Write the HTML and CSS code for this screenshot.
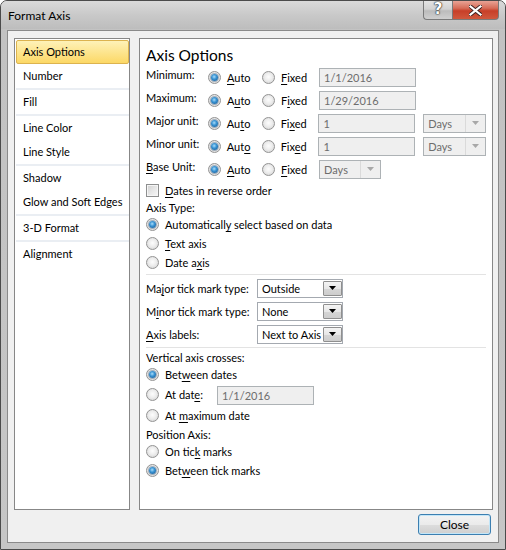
FILE: index.html
```html
<!DOCTYPE html>
<html>
<head>
<meta charset="utf-8">
<title>Format Axis</title>
<link rel="stylesheet" href="styles.css">
</head>
<body>
<div class="window">
  <div class="titlebar">
    <span class="title">Format Axis</span>
    <div class="caption">
      <div class="cap-btn help">?</div>
      <div class="cap-btn close">
        <svg width="13" height="11" viewBox="0 0 13 11"><path d="M1.5 1.5L11.5 9.5M11.5 1.5L1.5 9.5" stroke="#3a2020" stroke-width="4" stroke-linecap="square" fill="none"/><path d="M1.5 1.5L11.5 9.5M11.5 1.5L1.5 9.5" stroke="#ffffff" stroke-width="2.2" stroke-linecap="square" fill="none"/></svg>
      </div>
    </div>
  </div>
  <div class="client">
    <div class="panels">
      <div class="nav">
        <div class="nav-item selected">Axis Options</div>
        <div class="nav-item">Number</div>
        <div class="nav-sep"></div>
        <div class="nav-item">Fill</div>
        <div class="nav-sep"></div>
        <div class="nav-item">Line Color</div>
        <div class="nav-item">Line Style</div>
        <div class="nav-sep"></div>
        <div class="nav-item">Shadow</div>
        <div class="nav-item">Glow and Soft Edges</div>
        <div class="nav-sep"></div>
        <div class="nav-item">3-D Format</div>
        <div class="nav-sep"></div>
        <div class="nav-item">Alignment</div>
      </div>
      <div class="content">
        <div class="heading">Axis Options</div>

        <div class="scale-rows">
          <div class="srow">
            <span class="slabel">Minimum:</span>
            <span class="opt auto"><span class="radio on"></span><span><u>A</u>uto</span></span>
            <span class="opt fixed"><span class="radio"></span><span><u>F</u>ixed</span></span>
            <span class="field w97">1/1/2016</span>
          </div>
          <div class="srow">
            <span class="slabel">Maximum:</span>
            <span class="opt auto"><span class="radio on"></span><span>A<u>u</u>to</span></span>
            <span class="opt fixed"><span class="radio"></span><span>F<u>i</u>xed</span></span>
            <span class="field w97">1/29/2016</span>
          </div>
          <div class="srow">
            <span class="slabel">Major unit:</span>
            <span class="opt auto"><span class="radio on"></span><span>Au<u>t</u>o</span></span>
            <span class="opt fixed"><span class="radio"></span><span>Fi<u>x</u>ed</span></span>
            <span class="field w97">1</span>
            <span class="combo dis days"><span class="combo-text">Days</span><span class="combo-arrow"><svg width="7" height="4" viewBox="0 0 7 4"><path d="M0 0H7L3.5 4Z" fill="#a8a8a8"/></svg></span></span>
          </div>
          <div class="srow">
            <span class="slabel">Minor unit:</span>
            <span class="opt auto"><span class="radio on"></span><span>Aut<u>o</u></span></span>
            <span class="opt fixed"><span class="radio"></span><span>Fix<u>e</u>d</span></span>
            <span class="field w97">1</span>
            <span class="combo dis days"><span class="combo-text">Days</span><span class="combo-arrow"><svg width="7" height="4" viewBox="0 0 7 4"><path d="M0 0H7L3.5 4Z" fill="#a8a8a8"/></svg></span></span>
          </div>
          <div class="srow">
            <span class="slabel"><u>B</u>ase Unit:</span>
            <span class="opt auto"><span class="radio on"></span><span><u>A</u>uto</span></span>
            <span class="opt fixed"><span class="radio"></span><span><u>F</u>ixed</span></span>
            <span class="combo dis base"><span class="combo-text">Days</span><span class="combo-arrow"><svg width="7" height="4" viewBox="0 0 7 4"><path d="M0 0H7L3.5 4Z" fill="#a8a8a8"/></svg></span></span>
          </div>
        </div>

        <div class="line check-row"><span class="check"></span><span><u>D</u>ates in reverse order</span></div>

        <div class="line group-label">Axis Type:</div>
        <div class="rrow"><span class="radio on"></span><span>Automaticall<u>y</u> select based on data</span></div>
        <div class="rrow"><span class="radio"></span><span><u>T</u>ext axis</span></div>
        <div class="rrow"><span class="radio"></span><span>Date a<u>x</u>is</span></div>

        <div class="sep sep1"></div>

        <div class="drows">
          <div class="drow">
            <span class="dlabel">Ma<u>j</u>or tick mark type:</span>
            <span class="combo en"><span class="combo-text">Outside</span><span class="combo-btn"><svg width="7" height="4" viewBox="0 0 7 4"><path d="M0 0H7L3.5 4Z" fill="#000"/></svg></span></span>
          </div>
          <div class="drow">
            <span class="dlabel">M<u>i</u>nor tick mark type:</span>
            <span class="combo en"><span class="combo-text">None</span><span class="combo-btn"><svg width="7" height="4" viewBox="0 0 7 4"><path d="M0 0H7L3.5 4Z" fill="#000"/></svg></span></span>
          </div>
          <div class="drow">
            <span class="dlabel"><u>A</u>xis labels:</span>
            <span class="combo en"><span class="combo-text">Next to Axis</span><span class="combo-btn"><svg width="7" height="4" viewBox="0 0 7 4"><path d="M0 0H7L3.5 4Z" fill="#000"/></svg></span></span>
          </div>
        </div>

        <div class="sep sep2"></div>

        <div class="line group-label gl2">Vertical axis crosses:</div>
        <div class="rrow"><span class="radio on"></span><span>Bet<u>w</u>een dates</span></div>
        <div class="rrow date-row"><span class="radio"></span><span class="at-date">At dat<u>e</u>:</span><span class="field w97">1/1/2016</span></div>
        <div class="rrow"><span class="radio"></span><span>At <u>m</u>aximum date</span></div>

        <div class="line group-label gl3">Position Axis:</div>
        <div class="rrow"><span class="radio"></span><span>On tic<u>k</u> marks</span></div>
        <div class="rrow"><span class="radio on"></span><span>Bet<u>w</u>een tick marks</span></div>
      </div>
    </div>
    <div class="footer">
      <button class="btn">Close</button>
    </div>
  </div>
</div>
</body>
</html>
```

FILE: styles.css
```css
* { box-sizing: border-box; }

html, body {
  margin: 0;
  padding: 0;
  background: #ffffff;
}

body {
  font-family: Lato, "Liberation Sans", sans-serif;
  font-size: 11px;
  color: #000;
  white-space: nowrap;
}

u { text-decoration: underline; text-underline-offset: 2px; }

.window {
  width: 506px;
  height: 550px;
  border: 1px solid #4b4b4b;
  border-radius: 7px 7px 0 0;
  padding: 0 6px 6px;
  background: linear-gradient(180deg, #d3d3d3 0, #c2c2c2 30px, #c6c6c6 100%);
  display: flex;
  flex-direction: column;
  overflow: hidden;
}

.titlebar {
  margin: 0 -6px;
  height: 28px;
  padding: 0 6px 0 7px;
  display: flex;
  align-items: center;
  background: linear-gradient(180deg, #dadada 0, #c9c9c9 50%, #bdbdbd 100%);
}

.title {
  font-size: 12px;
  padding-top: 2px;
  color: #000;
}

.caption {
  margin-left: auto;
  align-self: flex-start;
  display: flex;
  height: 19px;
}

.cap-btn {
  height: 19px;
  border: 1px solid #7a7a7a;
  border-top: none;
  display: flex;
  align-items: center;
  justify-content: center;
}

.help {
  width: 29px;
  border-radius: 0 0 0 4px;
  border-right: none;
  background: linear-gradient(180deg, #e4e4e4 0, #d2d2d2 45%, #bcbcbc 55%, #d0d0d0 100%);
  color: #fff;
  font-family: "DejaVu Sans", sans-serif;
  font-weight: bold;
  font-size: 15px;
  line-height: 15px;
  padding-bottom: 1px;
  text-shadow: 0 0 1px #222, 0 0 1px #222, 0 0 2px #444;
}

.close {
  width: 47px;
  border-radius: 0 0 4px 0;
  background: linear-gradient(180deg, #e9a395 0, #d66c58 40%, #c73f28 55%, #d0583d 100%);
}

.client {
  height: 514px;
  margin-top: 1px;
  border: 1px solid #8a8a8a;
  background: #f0f0f0;
  padding: 7px 5px 0 6px;
  display: flex;
  flex-direction: column;
}

.panels {
  display: flex;
  gap: 9px;
  height: 472px;
}

.nav {
  width: 116px;
  background: #fff;
  border: 1px solid #878787;
  padding: 1px 0 0 1px;
}

.nav-item {
  height: 24px;
  line-height: 24px;
  padding-left: 7px;
}

.nav-item.selected {
  border: 1px solid #dcb34f;
  border-radius: 2px;
  background: linear-gradient(180deg, #fef2b8 0, #fde58f 50%, #fcd866 100%);
  line-height: 22px;
  padding-left: 6px;
}

.nav-sep {
  height: 2px;
  background: #eaeef3;
}

.content {
  width: 354px;
  background: #fff;
  border: 1px solid #878787;
  padding: 6px 6px 0 6px;
}

.heading {
  font-size: 15.5px;
  line-height: 20px;
  height: 20px;
}

.scale-rows {
  margin-top: 3px;
  display: flex;
  flex-direction: column;
  gap: 4px;
}

.srow {
  height: 19px;
  display: flex;
  align-items: center;
}

.slabel {
  width: 62px;
  align-self: flex-start;
  line-height: 13px;
}

.opt {
  display: flex;
  align-items: center;
}

.opt.auto { width: 54px; }
.opt.fixed { width: 57px; }

.radio {
  width: 13px;
  height: 13px;
  flex: none;
  border-radius: 50%;
  border: 1px solid #939393;
  background: radial-gradient(circle at 50% 45%, #fdfdfd 0, #ededed 45%, #cdcdcd 100%);
  margin-right: 6px;
  display: flex;
  align-items: center;
  justify-content: center;
}

.radio.on::after {
  content: "";
  width: 7px;
  height: 7px;
  border-radius: 50%;
  background: radial-gradient(circle at 45% 40%, #a9dcfa 0, #3b95d4 40%, #104f8a 100%);
  box-shadow: 0 0 0 1px rgba(20, 60, 100, 0.35);
}

.field {
  height: 19px;
  border: 1px solid #adb2b5;
  background: #efefef;
  color: #6d6d6d;
  padding-left: 4px;
  display: flex;
  align-items: center;
}

.w97 { width: 97px; }

.combo {
  height: 19px;
  border: 1px solid #adb2b5;
  display: flex;
  align-items: stretch;
}

.combo-text {
  flex: 1;
  padding-left: 4px;
  display: flex;
  align-items: center;
}

.combo.dis {
  background: #efefef;
  color: #6d6d6d;
}

.combo.days {
  width: 63px;
  margin-left: 8px;
}

.combo.base {
  width: 62px;
}

.combo-arrow {
  width: 20px;
  border-left: 1px solid #dadada;
  display: flex;
  align-items: center;
  justify-content: center;
}

.combo.en {
  width: 86px;
  background: #fff;
  border-color: #a4a9b0;
}

.combo-btn {
  width: 19px;
  margin: 1px 0 1px 0;
  border: 1px solid #8f8f8f;
  border-radius: 1px;
  background: linear-gradient(180deg, #f4f4f4 0, #e7e7e7 50%, #d6d6d6 51%, #cdcdcd 100%);
  display: flex;
  align-items: center;
  justify-content: center;
}

.line {
  height: 15px;
  line-height: 15px;
  display: flex;
  align-items: center;
}

.check-row {
  margin-top: 4px;
}

.check {
  width: 13px;
  height: 13px;
  flex: none;
  border: 1px solid #8e8f8f;
  background: linear-gradient(135deg, #cfcfcf 0, #e6e6e6 50%, #f7f7f7 100%);
  box-shadow: inset 0 0 0 1px #f5f5f5;
  margin-right: 6px;
}

.group-label {
  margin-top: 2px;
}

.rrow {
  height: 19px;
  display: flex;
  align-items: center;
}

.sep {
  height: 1px;
  background: #e3e3e3;
}

.sep1 { margin-top: 2px; }

.drows {
  margin-top: 4px;
  display: flex;
  flex-direction: column;
  gap: 4px;
}

.drow {
  height: 19px;
  display: flex;
  align-items: center;
}

.dlabel {
  width: 111px;
}

.sep2 { margin-top: 3px; }

.gl2 { margin-top: 2px; }

.date-row {
  height: 22px;
}

.at-date {
  width: 52px;
}

.date-row .field {
  margin-top: 2px;
}

.gl3 { margin-top: 2px; }

.footer {
  margin-top: 4px;
  display: flex;
  justify-content: flex-end;
  padding-right: 2px;
}

.btn {
  width: 73px;
  height: 21px;
  border: 1px solid #3c7fb1;
  border-radius: 3px;
  background: linear-gradient(180deg, #f3f3f3 0, #ebebeb 50%, #dddddd 51%, #cfcfcf 100%);
  box-shadow: inset 0 0 0 1px #c3e6f8;
  font-family: Lato, "Liberation Sans", sans-serif;
  font-size: 12px;
  color: #000;
  padding: 0;
}
```
